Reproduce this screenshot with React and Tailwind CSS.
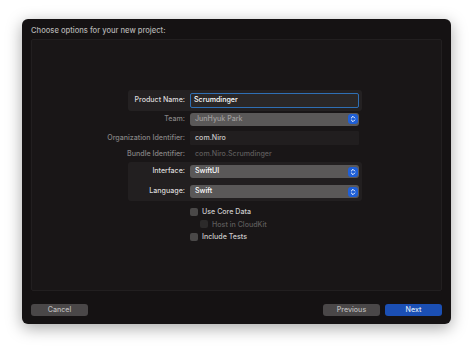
import { ChevronsUpDown } from "lucide-react";

function Stepper() {
  return (
    <span className="flex h-[10px] w-[10px] items-center justify-center rounded-[3px] bg-[#1f5fd6]">
      <ChevronsUpDown size={8} strokeWidth={3} className="text-white" />
    </span>
  );
}

function Label({ children, dim }) {
  return (
    <div className="flex w-[57px] shrink-0 justify-end">
      <span className={`whitespace-nowrap ${dim ? "text-[#858383]" : "text-[#dcdada]"}`}>
        {children}
      </span>
    </div>
  );
}

function Popup({ value, dim }) {
  return (
    <div className="flex h-[13px] w-[169px] items-center justify-between rounded-[3px] bg-[#5a5858] pl-[5px] pr-[1.5px]">
      <span className={dim ? "text-[#a09e9e]" : "text-white"}>{value}</span>
      <Stepper />
    </div>
  );
}

function Check({ label, dim, indent }) {
  return (
    <div className={`flex items-center gap-[4px] ${indent ? "pl-[10px]" : ""}`}>
      <span
        className={`h-[8px] w-[8px] rounded-[2px] ${dim ? "bg-[#2c2a2a]" : "bg-[#4a4848]"}`}
      />
      <span className={dim ? "text-[#5e5c5c]" : "text-[#cccaca]"}>{label}</span>
    </div>
  );
}

export default function App() {
  return (
    <div
      className="h-[349px] w-[474px] bg-white pl-[22px] pt-[19px] font-medium"
      style={{ fontFamily: "Inter, 'Liberation Sans', sans-serif" }}
    >
      <div className="flex h-[305px] w-[429px] flex-col rounded-[6px] bg-[#151213] px-[9px] shadow-[0_4px_16px_rgba(0,0,0,0.35)]">
        <p className="pt-[4px] text-[7.6px] leading-[15px] text-[#b4b2b2]">
          Choose options for your new project:
        </p>

        <div className="mt-[1px] flex h-[252px] flex-col rounded-[2px] border border-[#221f20] bg-[#191617] pl-[96px] pt-[50px] text-[7.1px]">
          <div className="flex w-[234px] items-center gap-[5px] rounded-[3px] bg-[#242122] py-[3px] pr-[3px]">
            <Label>Product Name:</Label>
            <div className="flex h-[15px] w-[169px] items-center rounded-[2px] border-[1.5px] border-[#2f6fb4] bg-[#2a2727] pl-[3px] text-white">
              Scrumdinger
            </div>
          </div>

          <div className="flex h-[16px] w-[234px] items-center gap-[5px]">
            <Label dim>Team:</Label>
            <Popup value="JunHyuk Park" dim />
          </div>

          <div className="mt-[3px] flex h-[16px] w-[234px] items-center gap-[5px]">
            <Label dim>Organization Identifier:</Label>
            <div className="flex h-[14px] w-[169px] items-center rounded-[1px] bg-[#211e1f] pl-[5px] text-[#c8c6c6]">
              com.Niro
            </div>
          </div>

          <div className="flex h-[16px] w-[234px] items-center gap-[5px]">
            <Label dim>Bundle Identifier:</Label>
            <span className="pl-[5px] text-[#5e5c5c]">com.Niro.Scrumdinger</span>
          </div>

          <div className="flex w-[234px] flex-col gap-[7px] rounded-[3px] bg-[#221f20] py-[3px] pr-[3px]">
            <div className="flex items-center gap-[5px]">
              <Label>Interface:</Label>
              <Popup value="SwiftUI" />
            </div>
            <div className="flex items-center gap-[5px]">
              <Label>Language:</Label>
              <Popup value="Swift" />
            </div>
          </div>

          <div className="mt-[6px] flex flex-col gap-[3.5px] pl-[62px] leading-[9px]">
            <Check label="Use Core Data" />
            <Check label="Host in CloudKit" dim indent />
            <Check label="Include Tests" />
          </div>
        </div>

        <div className="mt-[13px] flex justify-between text-[7.1px]">
          <button className="h-[12px] w-[57px] rounded-[3px] bg-[#4a4748] text-[#bcbaba]">
            Cancel
          </button>
          <div className="flex gap-[5px]">
            <button className="h-[12px] w-[57px] rounded-[3px] bg-[#4a4748] text-[#bcbaba]">
              Previous
            </button>
            <button className="h-[12px] w-[57px] rounded-[3px] bg-[#1b4fb4] text-[#dfe6f5]">
              Next
            </button>
          </div>
        </div>
      </div>
    </div>
  );
}
